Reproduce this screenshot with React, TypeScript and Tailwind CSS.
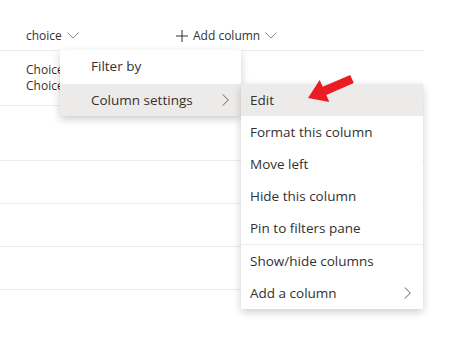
import { ReactNode } from 'react';

const FONT = { fontFamily: '"Open Sans", "Noto Sans", Arial, sans-serif' };

function Chevron({ className = '' }: { className?: string }) {
  return (
    <svg width="12" height="7" viewBox="0 0 12 7" className={className} fill="none">
      <path d="M0.5 0.5L6 6L11.5 0.5" stroke="#8a8886" strokeWidth="1" />
    </svg>
  );
}

function ChevronRight() {
  return (
    <svg width="7" height="12" viewBox="0 0 7 12" fill="none">
      <path d="M0.8 0.5L6.3 6L0.8 11.5" stroke="#605e5c" strokeWidth="1" />
    </svg>
  );
}

function MenuItem({
  children,
  active,
  sub,
  pad,
}: {
  children: ReactNode;
  active?: boolean;
  sub?: boolean;
  pad: string;
}) {
  return (
    <div
      className={`flex items-center h-[32px] pr-[12px] text-[13.5px] text-[#323130] ${pad} ${
        active ? 'bg-[#edebe9]' : ''
      }`}
    >
      <span className="flex-1">{children}</span>
      {sub && <ChevronRight />}
    </div>
  );
}

export default function App() {
  const rows = [55, 55, 43, 43, 43];

  return (
    <div className="relative w-[459px] h-[344px] bg-white overflow-hidden" style={FONT}>
      <div className="w-[424px]">
        <div className="flex items-center h-[51px] pt-[21px] border-b border-[#edebe9] text-[12px] text-[#323130]">
          <div className="w-[176px] pl-[26px] flex items-center gap-[5px]">
            <span>choice</span>
            <Chevron />
          </div>
          <div className="flex items-center gap-[5px] text-[#323130]">
            <svg width="12" height="12" viewBox="0 0 12 12" fill="none">
              <path d="M6 0V12M0 6H12" stroke="#323130" strokeWidth="1" />
            </svg>
            <span>Add column</span>
            <Chevron />
          </div>
        </div>
        {rows.map((h, i) => (
          <div
            key={i}
            className="border-b border-[#edebe9] pl-[26px] flex flex-col justify-center text-[12px] leading-[16px] text-[#323130]"
            style={{ height: h }}
          >
            {i === 0 && (
              <>
                <span>Choice 1</span>
                <span>Choice 2</span>
              </>
            )}
          </div>
        ))}
      </div>

      {/* first menu */}
      <div className="absolute left-[60px] top-[50px] w-[181px] bg-white shadow-[0_3px_8px_rgba(0,0,0,0.2)]">
        <MenuItem pad="pl-[31px]">Filter by</MenuItem>
        <div className="h-[2px]" />
        <MenuItem pad="pl-[31px]" active sub>
          Column settings
        </MenuItem>
      </div>

      {/* submenu */}
      <div className="absolute left-[241px] top-[84px] w-[182px] bg-white shadow-[0_3px_8px_rgba(0,0,0,0.2)]">
        <MenuItem pad="pl-[9px]" active>Edit</MenuItem>
        <MenuItem pad="pl-[9px]">Format this column</MenuItem>
        <MenuItem pad="pl-[9px]">Move left</MenuItem>
        <MenuItem pad="pl-[9px]">Hide this column</MenuItem>
        <MenuItem pad="pl-[9px]">Pin to filters pane</MenuItem>
        <div className="h-px bg-[#edebe9]" />
        <MenuItem pad="pl-[9px]">Show/hide columns</MenuItem>
        <MenuItem pad="pl-[9px]" sub>
          Add a column
        </MenuItem>
      </div>

      {/* red arrow */}
      <svg
        className="absolute left-0 top-0"
        width="459"
        height="344"
        viewBox="0 0 459 344"
      >
        <polygon
          points="308,98 319.7,79.9 322.7,86.8 350.2,74.9 353.8,83.1 326.3,95 329.3,101.9"
          fill="#ea1c24"
        />
      </svg>
    </div>
  );
}
